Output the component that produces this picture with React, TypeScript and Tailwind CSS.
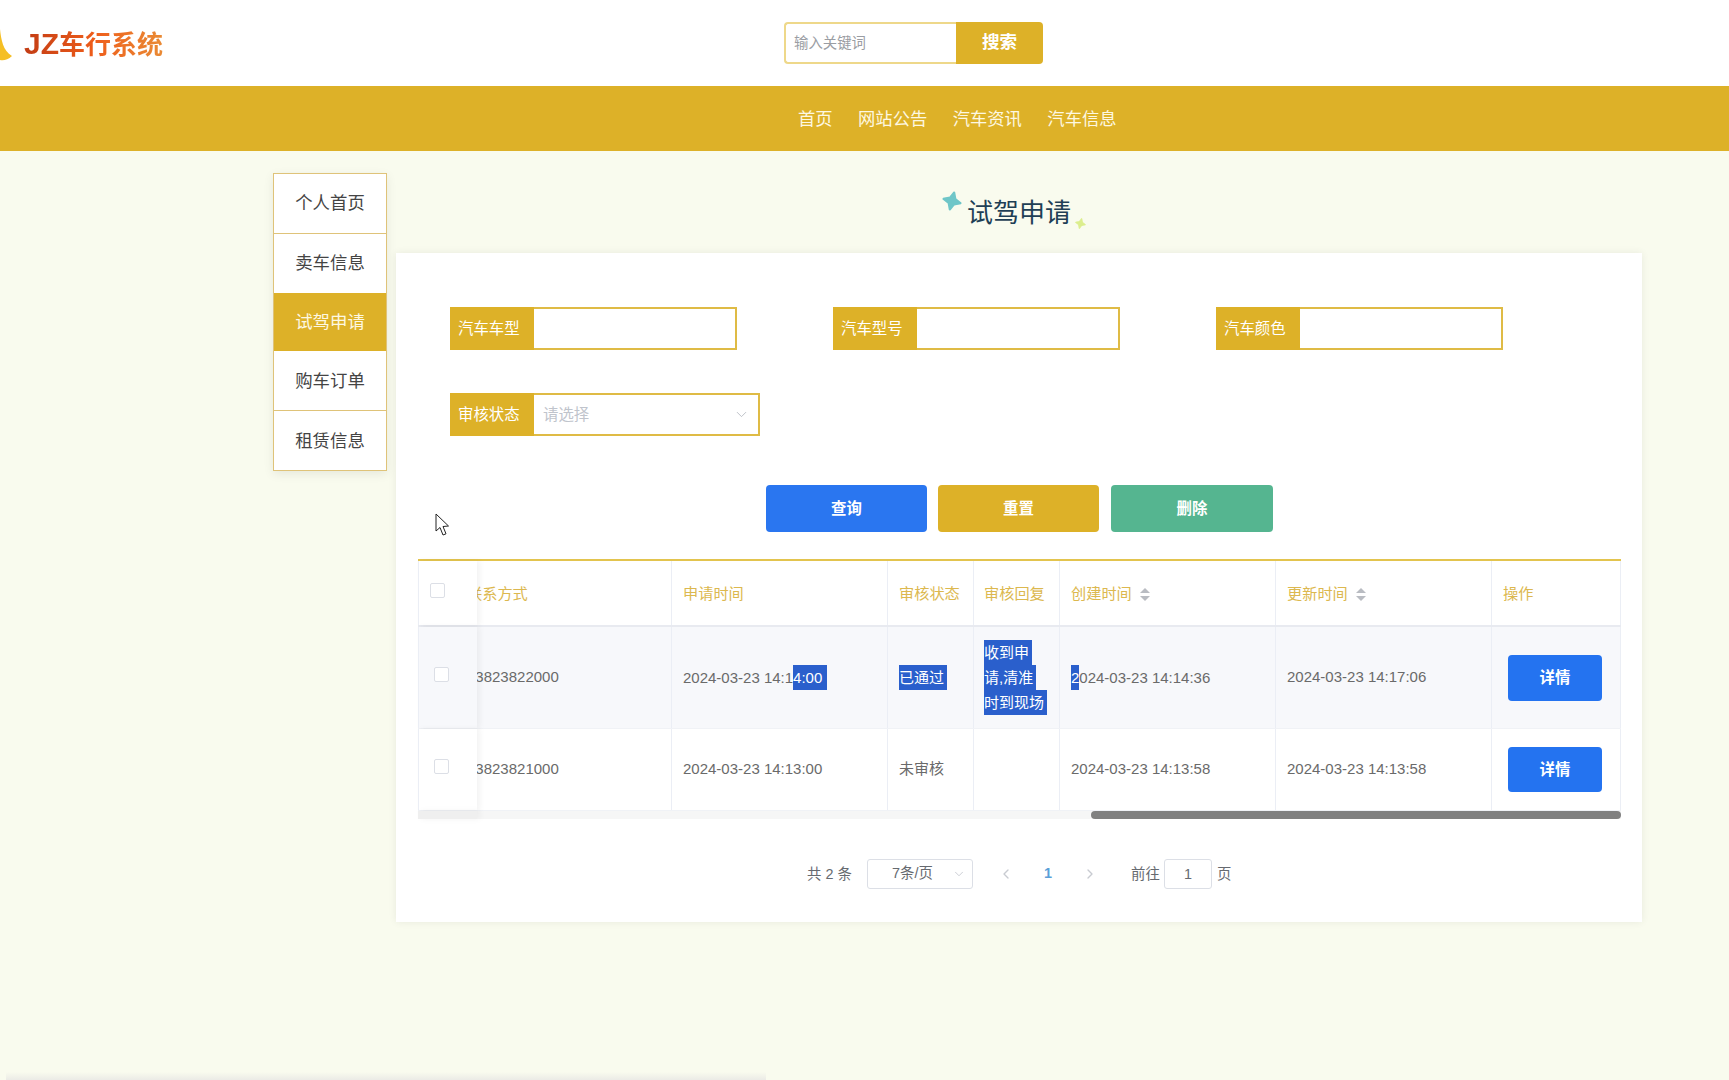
import React from "react";
import { ChevronDown, ChevronLeft, ChevronRight } from "lucide-react";

const COLS = "grid grid-cols-[59px_195px_216px_86px_86px_216px_216px_129px]";
const menu = ["个人首页", "卖车信息", "试驾申请", "购车订单", "租赁信息"];
const nav = ["首页", "网站公告", "汽车资讯", "汽车信息"];

function Hl({ children, block, tight, wide }: { children: React.ReactNode; block?: boolean; tight?: boolean; wide?: boolean }) {
  return (
    <span className={(block ? "block w-fit " : "inline-block ") + (tight ? "" : wide ? "pr-[5px] " : "pr-[3px] ") + "bg-[#2a5fcc] text-white leading-[25px]"}>
      {children}
    </span>
  );
}

function Field({ label }: { label: string }) {
  return (
    <div className="flex w-[287px] h-[43px]">
      <div className="w-[84px] bg-[#ddb128] text-white text-[15.4px] flex items-center pl-[8px]">{label}</div>
      <div className="flex-1 border-2 border-l-0 border-[#dfbb45] bg-white"></div>
    </div>
  );
}

function Star({ color }: { color: string }) {
  return (
    <svg viewBox="0 0 20 20" className="w-full h-full" style={{ transform: "rotate(14deg)" }}>
      <path d="M10 1 L12.8 7.2 L19 10 L12.8 12.8 L10 19 L7.2 12.8 L1 10 L7.2 7.2 Z" fill={color} stroke={color} strokeWidth="2" strokeLinejoin="round" />
    </svg>
  );
}

function Caret() {
  return (
    <svg width="10" height="13" viewBox="0 0 10 13" className="ml-[8px]">
      <path d="M5 0 L10 5 H0 Z" fill="#b9bcc2" />
      <path d="M5 13 L10 8 H0 Z" fill="#b9bcc2" />
    </svg>
  );
}

function Box() {
  return <div className="w-[15px] h-[15px] border border-[#dcdfe6] rounded-[2px] bg-white"></div>;
}

function Cell({ children, pad = "pl-[11px]", className = "" }: { children?: React.ReactNode; pad?: string; className?: string }) {
  return (
    <div className={"border-r border-[#ebeef5] flex items-center text-[15px] text-[#6a6a6a] " + pad + " " + className}>
      {children}
    </div>
  );
}

function Row({
  bg,
  h,
  btnH,
  phone,
  apply,
  status,
  reply,
  created,
  updated,
  boxTop,
}: {
  bg: string;
  h: string;
  btnH: string;
  phone: string;
  apply: React.ReactNode;
  status: React.ReactNode;
  reply?: React.ReactNode;
  created: React.ReactNode;
  updated: string;
  boxTop: string;
}) {
  return (
    <div className={COLS + " border-b border-[#f0f2f6] " + bg + " " + h}>
      <div className={"relative z-10 border-l border-[#ebeef5] shadow-[3px_0_6px_rgba(0,0,0,0.05)] pl-[15px] " + bg + " " + boxTop}>
        <Box />
      </div>
      <Cell pad="pl-0" className="overflow-hidden">
        <span className="-ml-[10px]">{phone}</span>
      </Cell>
      <Cell>{apply}</Cell>
      <Cell className="text-[15.4px]">{status}</Cell>
      <Cell pad="pl-[10px]" className="leading-[25px] text-[15.4px]">{reply}</Cell>
      <Cell>{created}</Cell>
      <Cell>{updated}</Cell>
      <Cell pad="pl-[16px]">
        <button className={"w-[94px] rounded-[4px] bg-[#2473f0] text-white text-[15.4px] font-bold " + btnH}>详情</button>
      </Cell>
    </div>
  );
}

function Th({ children, sort, pad = "pl-[11px]", className = "" }: { children?: React.ReactNode; sort?: boolean; pad?: string; className?: string }) {
  return (
    <div className={"border-r border-[#ebeef5] pt-[2px] flex items-center text-[15.2px] text-[#dcb84f] " + pad + " " + className}>
      {children}
      {sort ? <Caret /> : null}
    </div>
  );
}

export default function App() {
  return (
    <div className="h-[1080px] w-full overflow-hidden flex flex-col bg-[#f9fbee] font-['Liberation_Sans','Noto_Sans_CJK_SC',sans-serif]">
      <header className="h-[86px] bg-white flex items-start shrink-0">
        <div className="w-[784px] flex items-start pt-[23px]">
          <svg width="12" height="38" viewBox="0 0 12 38">
            <path d="M0 6 C1 16 3 28 12 33 C8 37 3 38 0 37 Z" fill="#f5bf24" />
          </svg>
          <div className="ml-[12px] mt-[5px] bg-linear-to-r from-[#c23c14] via-[#ee5c1a] to-[#e98a34] bg-clip-text text-transparent font-bold text-[26px] leading-[32px]">
            <span className="text-[30px]">JZ</span>车行系统
          </div>
        </div>
        <div className="mt-[22px] flex h-[42px] w-[259px]">
          <input
            readOnly
            placeholder="输入关键词"
            className="w-[172px] h-full rounded-l-[4px] border-2 border-r-0 border-[#eed88a] bg-white pl-[8px] text-[14.4px] outline-none placeholder:text-[#9a9da3]"
          />
          <button className="flex-1 rounded-r-[4px] bg-[#ddb128] text-white font-bold text-[17.6px] pb-[2px]">搜索</button>
        </div>
      </header>

      <nav className="h-[65px] bg-[#ddb128] flex items-center gap-[25.5px] pl-[798px] pt-[2px] text-[17.3px] text-[#fdf8e2] shrink-0">
        {nav.map((n) => (
          <span key={n}>{n}</span>
        ))}
      </nav>

      <div className="flex gap-[9px] pl-[273px] pt-[22px]">
        <aside className="w-[114px] h-[298px] self-start flex flex-col bg-white border border-[#dfc379] shadow-[0_3px_10px_rgba(0,0,0,0.08)]">
          {menu.map((m, i) => (
            <div
              key={m}
              className={
                "flex-1 flex items-center justify-center text-[17.4px] " +
                (i === 2 ? "bg-[#ddb128] text-[#fdf8e2] " : "text-[#444444] ") +
                (i < 4 && i !== 1 && i !== 2 ? "border-b border-[#dfc379]" : "")
              }
            >
              {m}
            </div>
          ))}
        </aside>

        <main className="w-[1246px]">
          <div className="h-[80px] flex items-center justify-center">
            <h1 className="relative text-[26px] leading-[34px] text-[#1f3f55]">
              <span className="absolute left-[-25px] top-[-5px] w-[20px] h-[20px]">
                <Star color="#6fc6c8" />
              </span>
              试驾申请
              <span className="absolute right-[-15px] top-[22px] w-[11px] h-[11px]">
                <Star color="#dcee8e" />
              </span>
            </h1>
          </div>

          <section className="relative h-[669px] bg-white shadow-[0_0_8px_rgba(0,0,0,0.07)] pt-[54px]">
            <div className="pl-[54px] flex gap-[96px]">
              <Field label="汽车车型" />
              <Field label="汽车型号" />
              <Field label="汽车颜色" />
            </div>

            <div className="pl-[54px] mt-[43px] flex">
              <div className="flex w-[310px] h-[43px]">
                <div className="w-[84px] bg-[#ddb128] text-white text-[15.4px] flex items-center pl-[8px]">审核状态</div>
                <div className="flex-1 border-2 border-l-0 border-[#dfbb45] bg-white flex items-center justify-between pl-[9px] pr-[8px] text-[15.4px] text-[#c0c4cc]">
                  请选择
                  <ChevronDown size={17} strokeWidth={1.2} color="#b4b8bf" />
                </div>
              </div>
            </div>

            <div className="mt-[49px] pl-[370px] flex">
              <button className="w-[161px] h-[47px] pt-[1px] rounded-[4px] bg-[#2a76f0] text-white font-bold text-[15.4px]">查询</button>
              <button className="ml-[11px] w-[161px] h-[47px] pt-[1px] rounded-[4px] bg-[#ddb128] text-white font-bold text-[15.4px]">重置</button>
              <button className="ml-[12px] w-[162px] h-[47px] pt-[1px] rounded-[4px] bg-[#55b590] text-white font-bold text-[15.4px]">删除</button>
            </div>

            <div className="mt-[27px] ml-[22px] w-[1203px]">
              <div className={COLS + " h-[68px] border-t-2 border-t-[#e3c44e] border-b-2 border-b-[#e8eaf0] bg-white"}>
                <div className="relative z-10 bg-white border-l border-[#ebeef5] shadow-[3px_0_6px_rgba(0,0,0,0.05)] pl-[11px] pt-[22px]">
                  <Box />
                </div>
                <Th pad="pl-0" className="overflow-hidden">
                  <span className="-ml-[10px] whitespace-nowrap">联系方式</span>
                </Th>
                <Th>申请时间</Th>
                <Th>审核状态</Th>
                <Th pad="pl-[10px]">审核回复</Th>
                <Th sort>创建时间</Th>
                <Th sort>更新时间</Th>
                <Th>操作</Th>
              </div>

              <Row
                bg="bg-[#f7f8fb]"
                h="h-[102px]"
                btnH="h-[46px]"
                boxTop="pt-[40px]"
                phone="13823822000"
                apply={
                  <span>
                    2024-03-23 14:1<Hl wide>4:00</Hl>
                  </span>
                }
                status={<Hl>已通过</Hl>}
                reply={
                  <div>
                    <Hl block>收到申</Hl>
                    <Hl block>请,清准</Hl>
                    <Hl block>时到现场</Hl>
                  </div>
                }
                created={
                  <span>
                    <Hl tight>2</Hl>024-03-23 14:14:36
                  </span>
                }
                updated="2024-03-23 14:17:06"
              />
              <Row
                bg="bg-white"
                h="h-[82px]"
                btnH="h-[45px]"
                boxTop="pt-[30px]"
                phone="13823821000"
                apply="2024-03-23 14:13:00"
                status="未审核"
                created="2024-03-23 14:13:58"
                updated="2024-03-23 14:13:58"
              />

              <div className="h-[8px] flex bg-[#f6f6f6]">
                <div className="relative z-10 w-[59px] bg-[#efefef] shadow-[3px_0_6px_rgba(0,0,0,0.05)]"></div>
                <div className="ml-[614px] flex-1 rounded-full bg-[#808080]"></div>
              </div>
            </div>

            <div className="mt-[40px] pl-[411px] flex items-center h-[30px] text-[14.4px] text-[#666a70]">
              <span className="w-[43px] whitespace-nowrap pt-[1px]">共 2 条</span>
              <div className="ml-[17px] w-[106px] h-[30px] border border-[#dcdfe6] rounded-[3px] flex items-center justify-between pl-[24px] pr-[6px]">
                7条/页
                <ChevronDown size={14} strokeWidth={1.4} color="#c0c4cc" />
              </div>
              <div className="ml-[24px] w-[18px] flex justify-center">
                <ChevronLeft size={16} strokeWidth={2} color="#c8cbd1" />
              </div>
              <div className="ml-[15px] w-[36px] text-center font-bold text-[#5b9fd8]">1</div>
              <div className="ml-[15px] w-[18px] flex justify-center">
                <ChevronRight size={16} strokeWidth={2} color="#c8cbd1" />
              </div>
              <span className="ml-[32px] w-[29px] whitespace-nowrap pt-[1px]">前往</span>
              <div className="ml-[4px] w-[48px] h-[30px] pt-[1px] border border-[#dcdfe6] rounded-[3px] flex items-center justify-center">1</div>
              <span className="ml-[5px] pt-[1px]">页</span>
            </div>

            <svg width="15" height="24" viewBox="0 0 15 24" className="absolute left-[39px] top-[260px]">
              <path d="M1 1 V18 L5 14.5 L8 22 L11 20.8 L8 13.5 L13.5 13 Z" fill="#ffffff" stroke="#222222" strokeWidth="1" strokeLinejoin="round" />
            </svg>
          </section>
        </main>
      </div>

      <div className="mt-auto ml-[6px] w-[760px] h-[8px] bg-linear-to-b from-[#f9fbee] to-[#ebebe6] shrink-0"></div>
    </div>
  );
}
